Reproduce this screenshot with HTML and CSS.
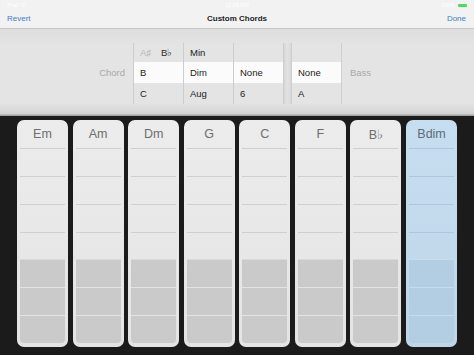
FILE: index.html
```html
<!DOCTYPE html>
<html>
<head>
<meta charset="utf-8">
<link rel="stylesheet" href="styles.css">
</head>
<body>
<div class="screen">
  <div class="status">
    <span class="st-left">iPad ᯤ</span>
    <span class="st-mid">12:08 PM</span>
    <span class="st-right">100% <i class="batt"></i></span>
  </div>
  <div class="nav">
    <span class="btn">Revert</span>
    <span class="title">Custom Chords</span>
    <span class="btn">Done</span>
  </div>
  <div class="picker-area">
    <div class="plabel chord">Chord</div>
    <div class="wheel">
      <div class="col">
        <div class="cell"><span class="faint">A♯</span><span class="flat">B♭</span></div>
        <div class="cell sel">B</div>
        <div class="cell">C</div>
      </div>
      <div class="col">
        <div class="cell">Min</div>
        <div class="cell sel">Dim</div>
        <div class="cell">Aug</div>
      </div>
      <div class="col">
        <div class="cell"></div>
        <div class="cell sel">None</div>
        <div class="cell">6</div>
      </div>
    </div>
    <div class="sep"></div>
    <div class="wheel last">
      <div class="col">
        <div class="cell"></div>
        <div class="cell sel">None</div>
        <div class="cell">A</div>
      </div>
    </div>
    <div class="plabel bass">Bass</div>
  </div>
  <div class="board">
    <div class="strip"><div class="head">Em</div><div class="c"></div><div class="c"></div><div class="c"></div><div class="c"></div><div class="c d"></div><div class="c d"></div><div class="c d"></div></div>
    <div class="strip"><div class="head">Am</div><div class="c"></div><div class="c"></div><div class="c"></div><div class="c"></div><div class="c d"></div><div class="c d"></div><div class="c d"></div></div>
    <div class="strip"><div class="head">Dm</div><div class="c"></div><div class="c"></div><div class="c"></div><div class="c"></div><div class="c d"></div><div class="c d"></div><div class="c d"></div></div>
    <div class="strip"><div class="head">G</div><div class="c"></div><div class="c"></div><div class="c"></div><div class="c"></div><div class="c d"></div><div class="c d"></div><div class="c d"></div></div>
    <div class="strip"><div class="head">C</div><div class="c"></div><div class="c"></div><div class="c"></div><div class="c"></div><div class="c d"></div><div class="c d"></div><div class="c d"></div></div>
    <div class="strip"><div class="head">F</div><div class="c"></div><div class="c"></div><div class="c"></div><div class="c"></div><div class="c d"></div><div class="c d"></div><div class="c d"></div></div>
    <div class="strip"><div class="head">B♭</div><div class="c"></div><div class="c"></div><div class="c"></div><div class="c"></div><div class="c d"></div><div class="c d"></div><div class="c d"></div></div>
    <div class="strip active"><div class="head">Bdim</div><div class="c"></div><div class="c"></div><div class="c"></div><div class="c"></div><div class="c d"></div><div class="c d"></div><div class="c d"></div></div>
  </div>
</div>
</body>
</html>
```

FILE: styles.css
```css
* { box-sizing: border-box; margin: 0; padding: 0; }
html, body { width: 474px; height: 355px; overflow: hidden; }
body { font-family: "Liberation Sans", Arial, sans-serif; background: #1b1b1b; }

.screen { width: 474px; height: 355px; display: flex; flex-direction: column; }

.status {
  height: 10px;
  background: #f2f2f2;
  display: flex;
  align-items: center;
  justify-content: space-between;
  padding: 0 7px;
  font-size: 5.5px;
  color: #ffffff;
  position: relative;
}
.st-mid { position: absolute; left: 0; right: 0; text-align: center; }
.st-right { display: flex; align-items: center; gap: 3px; }
.batt { display: inline-block; width: 9px; height: 3px; background: #4cd964; border-radius: 1px; }

.nav {
  height: 19px;
  background: #f2f2f2;
  border-bottom: 1px solid #c6c6c6;
  display: flex;
  align-items: center;
  justify-content: space-between;
  padding: 0 8px 1px 7px;
  font-size: 8px;
  position: relative;
}
.btn { color: #3b7fd0; }
.title {
  position: absolute; left: 0; right: 0; text-align: center;
  font-weight: bold; color: #1e1e1e;
}

.picker-area {
  height: 87px;
  background: linear-gradient(#dedede, #e4e4e4 20%, #e4e4e4 85%, #d4d4d4 97%, #9a9a9a);
  display: flex;
  align-items: flex-start;
  padding: 14px 0 0 65px;
}
.plabel {
  color: #a9a9a9;
  font-size: 9.5px;
  height: 21px;
  line-height: 21px;
  margin-top: 19px;
}
.chord { width: 60px; margin-right: 8px; text-align: right; }
.bass { margin-left: 8px; }

.wheel { display: flex; }
.wheel.last { border-right: 1px solid #cfcfcf; }
.col { width: 50px; border-left: 1px solid #cdcdcd; display: flex; flex-direction: column; }
.cell {
  height: 20px;
  line-height: 20px;
  padding-left: 6px;
  font-size: 9.5px;
  color: #222;
  display: flex;
  gap: 10px;
}
.cell:first-child { height: 19px; line-height: 19px; }
.cell.sel { height: 21px; line-height: 21px; background: #fbfbfb; }
.cell:last-child { height: 21px; line-height: 21px; }
.faint { color: #b8b8b8; }
.flat { color: #2a2a2a; }

.sep {
  width: 8px;
  height: 61px;
  border-left: 1px solid #cdcdcd;
  background: linear-gradient(90deg, #d8d8d8, #e2e2e2 50%, #d8d8d8);
}

.board {
  flex: 1;
  display: flex;
  gap: 4.6px;
  padding: 4px 17px 8px;
  background: #1b1b1b;
}
.strip {
  flex: 1;
  background: linear-gradient(#ececec, #e4e4e4);
  border-radius: 7px;
  display: flex;
  flex-direction: column;
  padding: 0 3px 4px;
}
.head {
  height: 28px;
  flex: none;
  display: flex;
  align-items: center;
  justify-content: center;
  font-size: 12.5px;
  color: #6e6e6e;
}
.c { flex: 1; border-top: 1px solid #cfcfcf; }
.c.d { background: #cacaca; border-top: 1px solid #e3e3e3; }
.c.d:nth-child(6) { border-top: 1px solid #dadada; }
.c.d:last-child { border-radius: 0 0 4px 4px; }

.strip.active { background: linear-gradient(#c7def0, #bfd6ea); }
.strip.active .head { color: #5b6b7b; }
.strip.active .c { border-top-color: #aec7dc; }
.strip.active .c.d { background: #b3cde2; border-top-color: #c6dbec; }
```
